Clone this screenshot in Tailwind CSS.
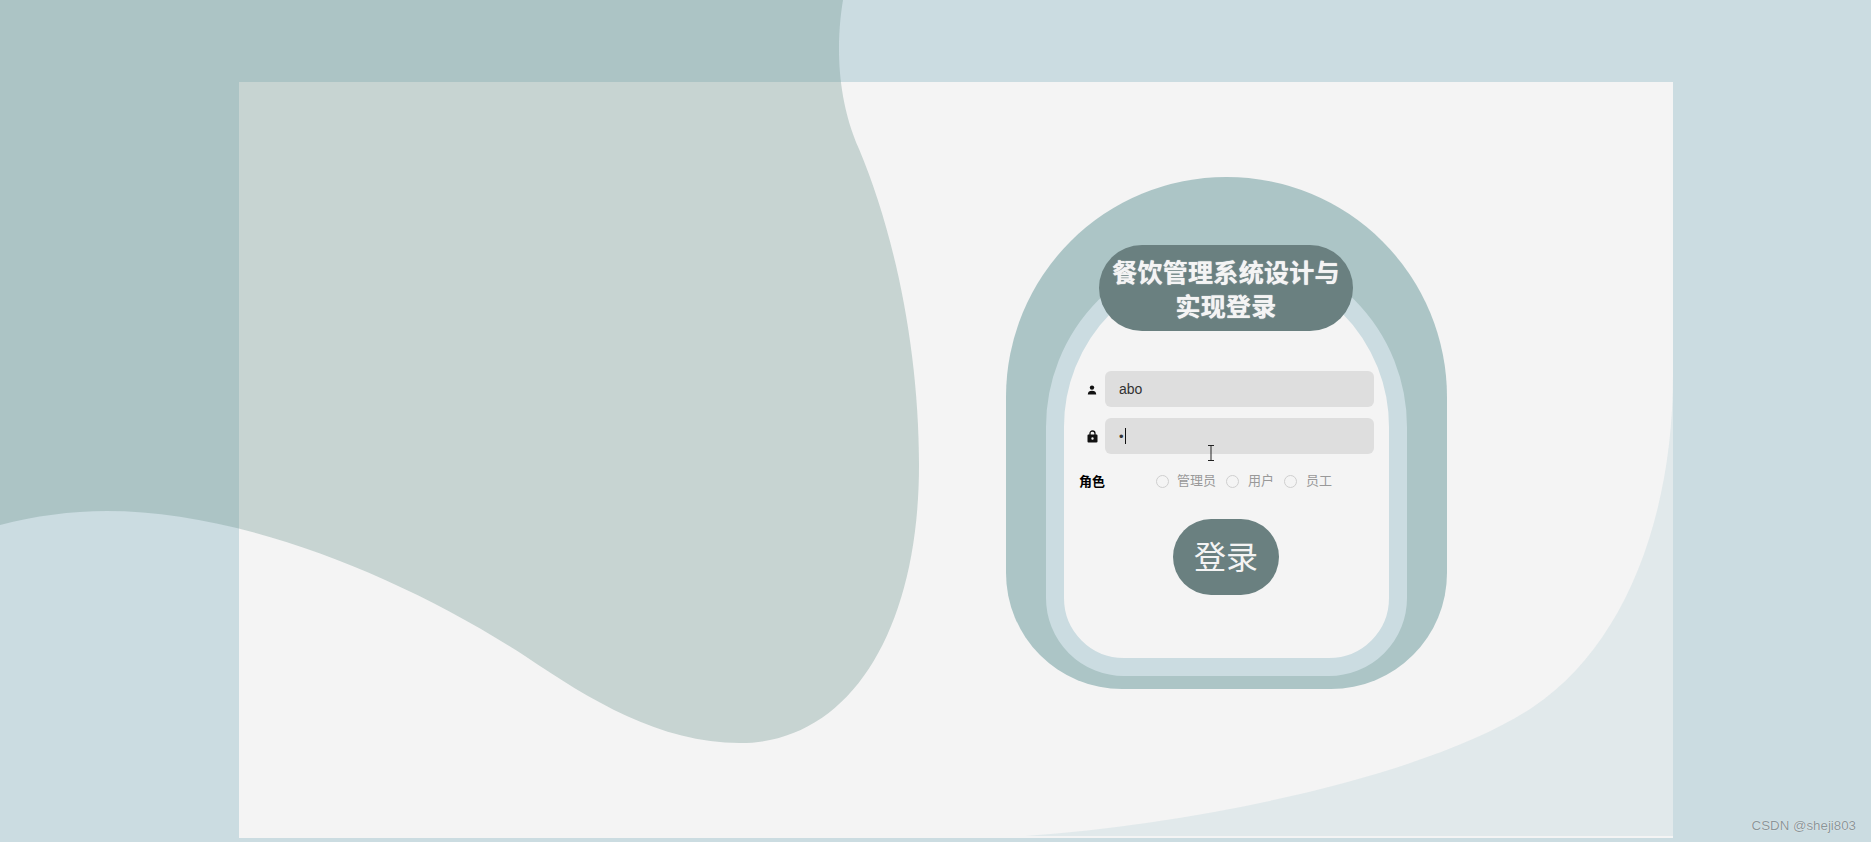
<!DOCTYPE html>
<html lang="zh">
<head>
<meta charset="utf-8">
<title>餐饮管理系统设计与实现登录</title>
<script src="https://cdn.jsdelivr.net/npm/@tailwindcss/browser@4"></script>
</head>
<body class="relative w-[1871px] h-[842px] overflow-hidden bg-[#cbdce1] font-['Liberation_Sans','Noto_Sans_CJK_SC',sans-serif]">

  <div class="pt-[82px] pl-[239px]">
    <main class="w-[1434px] h-[756px] bg-[#f4f4f4] pt-[95px] pl-[767px]">

      <div class="relative w-[441px] h-[512px] bg-[#acc5c6] rounded-[220px_220px_116px_116px] pt-[70px] pl-[40px]">

        <div class="w-[361px] h-[429px] border-[18px] border-[#cbdce1] bg-[#f4f4f4] rounded-[180px_180px_78px_78px] flex flex-col pt-[106px]">
          <div class="flex items-center ml-[15px]">
            <span class="w-[26px] flex justify-center">
              <svg class="w-[10px] h-[10px] mt-[1px]" viewBox="0 0 10 10" fill="#111"><circle cx="5" cy="2.6" r="2.2"/><path d="M0.8 9.400C0.8 6.900 2.600 5.800 5 5.800s4.200 1.100 4.200 3.600z"/></svg>
            </span>
            <div class="w-[269px] h-[36px] rounded-[6px] bg-[#dedede] pl-[14px] flex items-center text-[14px] text-[#333]">abo</div>
          </div>

          <div class="flex items-center ml-[15px] mt-[11px]">
            <span class="w-[26px] flex justify-center">
              <svg class="w-[11px] h-[13px] mt-[1px]" viewBox="0 0 11 13" fill="#111"><path fill="none" stroke="#111" stroke-width="1.300" d="M3 5V3.500C3 1.900 4.100 1 5.500 1S8 1.900 8 3.500V5"/><path fill-rule="evenodd" d="M1.400 4.500h8.200c.5 0 .9.4.9.9v6.200c0 .5-.4.9-.9.9H1.400c-.5 0-.9-.4-.9-.9V5.400c0-.5.4-.9.9-.9zM5.500 7.300a1.200 1.200 0 1 0 0 2.400 1.200 1.200 0 0 0 0-2.400z"/></svg>
            </span>
            <div class="w-[269px] h-[36px] rounded-[6px] bg-[#dedede] pl-[14px] flex items-center text-[14px] text-[#333]">
              <span class="text-[13px] leading-none">•</span><span class="w-[1px] h-[16px] ml-[1px] bg-[#111]"></span>
            </div>
          </div>

          <div class="flex items-center ml-[15px] mt-[16px] h-[22px]">
            <span class="w-[77px] pt-[1px] text-[13px] font-bold text-black">角色</span>
            <label class="flex items-center text-[13px] text-[#999]"><span class="w-[13px] h-[13px] rounded-full border border-[#cfcfcf]"></span><span class="ml-[8px]">管理员</span></label>
            <label class="flex items-center text-[13px] text-[#999] ml-[10px]"><span class="w-[13px] h-[13px] rounded-full border border-[#cfcfcf]"></span><span class="ml-[9px]">用户</span></label>
            <label class="flex items-center text-[13px] text-[#999] ml-[10px]"><span class="w-[13px] h-[13px] rounded-full border border-[#cfcfcf]"></span><span class="ml-[9px]">员工</span></label>
          </div>

          <button class="self-center -ml-[1px] mt-[27px] w-[106px] h-[76px] pt-[2px] rounded-[38px] bg-[#6a8080] text-[32px] leading-none text-[#f4f4f4]">登录</button>
        </div>

        <h1 class="absolute left-[93px] top-[68px] w-[254px] h-[86px] pt-[3px] rounded-[43px] bg-[#6a8080] flex items-center justify-center text-center text-[25px] tracking-[0.3px] leading-[34px] font-bold text-[#f4f4f4] px-[10px] [text-shadow:0_0_1px_#f4f4f4]">餐饮管理系统设计与实现登录</h1>
      </div>

    </main>
  </div>

  <!-- background shapes sit over the panel -->
  <svg class="absolute left-0 top-0 w-[1871px] h-[842px]" viewBox="0 0 1871 842">
    <path fill="#6f968f" fill-opacity=".34" d="M0 0H843C838 30 833 90 859 149C895 235 919 350 919 465C919 630 850 743 740 743C660 743 590 700 525 656C400 575 240 511 107 511C70 511 35 516 0 525Z"/>
    <path fill="#cbdce1" fill-opacity=".46" d="M1673 375C1673 520 1623 647 1533 707C1440 770 1220 822 1026 836H1673Z"/>
  </svg>

  <!-- mouse cursor -->
  <svg class="absolute left-[1206px] top-[444px] w-[10px] h-[18px]" viewBox="0 0 10 18" fill="none" stroke="#222" stroke-width="1"><path d="M2 1.500H8M2 16.500H8M5 1.500V16.500"/></svg>

  <span class="absolute right-[15px] top-[816px] text-[13.3px] text-[#8a9598] [text-shadow:0_0_1px_#fff]">CSDN @sheji803</span>

</body>
</html>
